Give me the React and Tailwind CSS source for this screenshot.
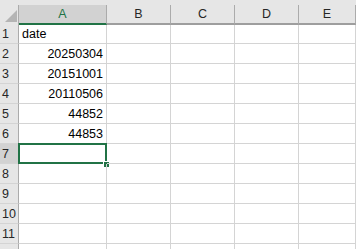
import React from "react";

const columns = [
  { label: "A", width: "w-[88px]" },
  { label: "B", width: "w-16" },
  { label: "C", width: "w-16" },
  { label: "D", width: "w-16" },
  { label: "E", width: "flex-1" },
];

const values = ["date", "20250304", "20151001", "20110506", "44852", "44853"];
const rowCount = 12;
const selectedRow = 7;

const CornerCell = () => (
  <div className="w-[19px] shrink-0 h-full bg-[#e6e6e6] border-r border-[#ababab] relative">
    <svg
      className="absolute left-[5px] top-[5px]"
      width="12"
      height="12"
      viewBox="0 0 12 12"
    >
      <polygon points="12,0 12,12 0,12" fill="#b4b4b4" />
    </svg>
  </div>
);

const App = () => {
  const rows = Array.from({ length: rowCount }, (_, i) => i + 1);

  return (
    <div
      className="w-[356px] h-[249px] overflow-hidden bg-white text-[12.5px] text-black"
      style={{ fontFamily: '"Liberation Sans", Arial, sans-serif' }}
    >
      <div className="h-[5px] bg-[#e6e6e6]" />

      {/* column headers */}
      <div className="flex h-5 bg-[#e6e6e6]">
        <CornerCell />
        {columns.map((col) => {
          const active = col.label === "A";
          return (
            <div
              key={col.label}
              className={`${col.width} shrink-0 flex items-center justify-center border-r border-b-2 ${
                active
                  ? "bg-[#d2d2d2] border-b-[#217346] text-[#217346] border-r-[#ababab]"
                  : "border-b-[#9e9e9e] border-r-[#ababab] text-[#262626]"
              }`}
            >
              <span className="leading-none pt-px">{col.label}</span>
            </div>
          );
        })}
      </div>

      {/* rows */}
      {rows.map((r) => {
        const value = values[r - 1] ?? "";
        const isText = value !== "" && isNaN(Number(value));
        const isSelected = r === selectedRow;
        // last row is only a sliver at the bottom edge, its number is hidden
        const showNumber = r < rowCount;
        return (
          <div key={r} className={`flex ${r === 1 ? "h-[19px]" : "h-5"}`}>
            <div
              className={`w-[19px] shrink-0 flex items-center pl-[2px] border-r border-r-[#ababab] border-b border-b-[#d4d4d4] text-[#262626] ${
                isSelected ? "bg-[#d2d2d2]" : "bg-[#e6e6e6]"
              }`}
            >
              {showNumber && <span className="leading-none pt-px">{r}</span>}
            </div>
            {columns.map((col) => {
              const first = col.label === "A";
              return (
                <div
                  key={col.label}
                  className={`${col.width} shrink-0 relative flex items-center px-[3px] border-r border-b border-[#d4d4d4] ${
                    isText ? "justify-start" : "justify-end"
                  }`}
                >
                  {first && <span className="leading-none pt-px">{value}</span>}
                  {first && isSelected && (
                    <>
                      <div className="absolute -left-px -top-px -right-px -bottom-px border-2 border-[#217346]" />
                      <div className="absolute left-[84px] top-[17px] w-[7px] h-[7px] bg-[#217346] border border-white" />
                    </>
                  )}
                </div>
              );
            })}
          </div>
        );
      })}
    </div>
  );
};

export default App;
